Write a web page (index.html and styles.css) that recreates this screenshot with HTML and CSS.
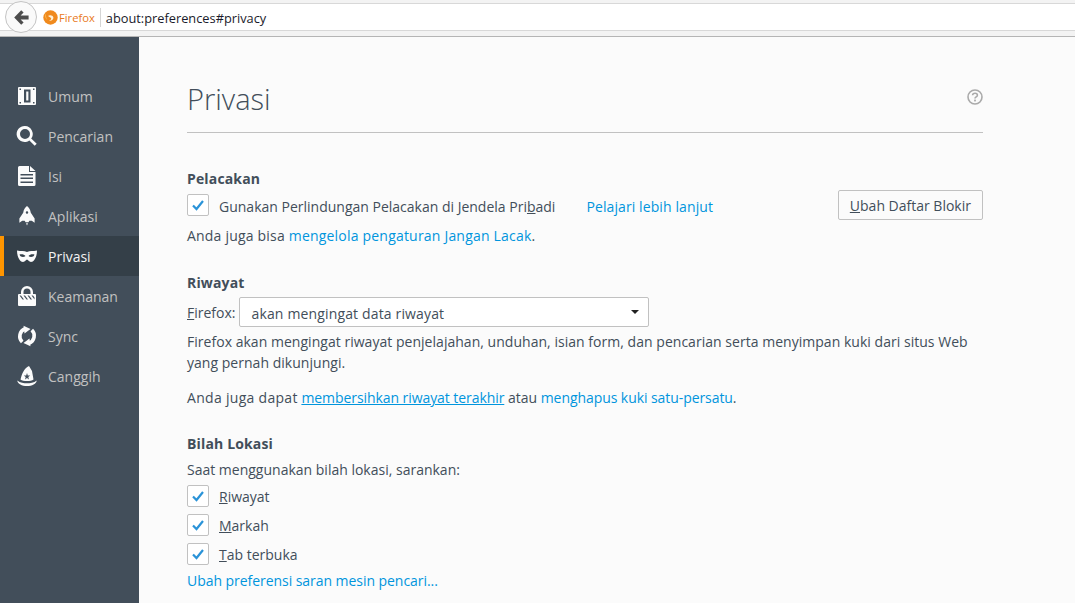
FILE: index.html
```html
<!DOCTYPE html>
<html lang="en">
<head>
    <meta charset="UTF-8">
    <title>Privasi</title>
    <link rel="stylesheet" href="styles.css">
</head>
<body>
    <!-- URL bar -->
    <div class="toolbar">
        <div class="back-btn">
            <svg width="15" height="15" viewBox="0 0 15 15"><path d="M7.2 0.3 L0.2 7.5 L7.2 14.7 L9.6 12.4 L6.6 9.5 H14.6 V5.5 H6.6 L9.6 2.6 Z" fill="#4d4d4d"/></svg>
        </div>
        <div class="url-bar">
            <svg class="fx-icon" width="15" height="15" viewBox="0 0 15 15">
                <circle cx="7.5" cy="7.5" r="7.2" fill="#f08a1d"/>
                <path d="M5 6 C6.5 4.6 10 5 10.4 7.6 C10.6 10 8 11.4 6 10.6 C7.8 10.4 8.6 9 8 8 C7.2 7 6 7 5 6 Z" fill="#fff2d8"/>
                <path d="M2 3.5 C3 5.5 3 8 4.5 10 C3 9 1.8 7 2 3.5 Z" fill="#ffc35a"/>
            </svg>
            <span class="fx-label">Firefox</span>
            <span class="url-text">about:preferences#privacy</span>
        </div>
    </div>

    <div class="main">
        <!-- Sidebar -->
        <nav class="sidebar">
            <div class="nav-item">
                <svg class="nav-icon" viewBox="-1 -1 20 20"><path fill-rule="evenodd" d="M1 0 H17 A1 1 0 0 1 18 1 V17 A1 1 0 0 1 17 18 H1 A1 1 0 0 1 0 17 V1 A1 1 0 0 1 1 0 Z M6 2.5 V15.5 H12.5 V2.5 Z M8.2 4.5 H10.4 V13.5 H8.2 Z M1.5 1.5 V3 H3 V1.5 Z M15 1.5 V3 H16.5 V1.5 Z M1.5 15 V16.5 H3 V15 Z M15 15 V16.5 H16.5 V15 Z"/></svg>
                Umum
            </div>
            <div class="nav-item">
                <svg class="nav-icon" viewBox="0 0 20 20"><path fill-rule="evenodd" d="M8 0 A8 8 0 0 1 14.2 12.6 L19.7 17.7 L17.7 19.7 L12.4 14.4 A8 8 0 1 1 8 0 Z M8 3 A5 5 0 1 0 8 13 A5 5 0 0 0 8 3 Z"/></svg>
                Pencarian
            </div>
            <div class="nav-item">
                <svg class="nav-icon" viewBox="0 0 18 20"><path fill-rule="evenodd" d="M1.5 0 H11 V6 H17.5 V18.5 A1.5 1.5 0 0 1 16 20 H1.5 A1.5 1.5 0 0 1 0 18.5 V1.5 A1.5 1.5 0 0 1 1.5 0 Z M2.5 8 V9.5 H15 V8 Z M2.5 11.5 V13 H15 V11.5 Z M2.5 15.5 V17 H15 V15.5 Z M12 0 L17.5 5 H12 Z"/></svg>
                Isi
            </div>
            <div class="nav-item">
                <svg class="nav-icon" viewBox="0 0 18 21"><path fill-rule="evenodd" d="M9 0 C11 1.5 12.5 4 13 7 L17 13 V17.5 L14 15.5 H11.5 L10.5 17 H7.5 L6.5 15.5 H4 L1 17.5 V13 L5 7 C5.5 4 7 1.5 9 0 Z M9 5.5 A1.3 1.3 0 1 0 9 8.1 A1.3 1.3 0 0 0 9 5.5 Z M8 18 H10 L9 20.5 Z"/></svg>
                Aplikasi
            </div>
            <div class="nav-item active">
                <svg class="nav-icon" viewBox="0 0 20 12"><path fill-rule="evenodd" d="M0 0.5 C4 1.5 7 0.5 10 2 C13 0.5 16 1.5 20 0.5 C20 7 17 12 14 12 C12 12 11 9.5 10 9.5 C9 9.5 8 12 6 12 C3 12 0 7 0 0.5 Z M2.5 4.5 C3.5 7.5 7 7.5 8.5 6 C7 4 4.5 4 2.5 4.5 Z M17.5 4.5 C16.5 7.5 13 7.5 11.5 6 C13 4 15.5 4 17.5 4.5 Z"/></svg>
                Privasi
            </div>
            <div class="nav-item">
                <svg class="nav-icon" viewBox="0 0 18 20"><path fill-rule="evenodd" d="M1 8 H3 V6 A6 6 0 0 1 15 6 V8 H17 A1 1 0 0 1 18 9 V19 A1 1 0 0 1 17 20 H1 A1 1 0 0 1 0 19 V9 A1 1 0 0 1 1 8 Z M5.5 8 H12.5 V6 A3.5 3.5 0 0 0 5.5 6 Z M1.5 9.5 L4.5 13.5 L6 13.5 L3 9.5 Z M5.5 9.5 L8.5 13.5 L10 13.5 L7 9.5 Z M9.5 9.5 L12.5 13.5 L14 13.5 L11 9.5 Z M13.5 9.5 L16.5 13.5 V11.5 L15 9.5 Z"/></svg>
                Keamanan
            </div>
            <div class="nav-item">
                <svg class="nav-icon" viewBox="0 0 20 20">
                    <path class="sync-arc" d="M5.2 16 A8 8 0 0 1 8 2.8"/>
                    <path d="M6.5 -0.2 L13.5 3 L7.5 7.5 Z"/>
                    <path class="sync-arc" d="M14.8 4 A8 8 0 0 1 12 17.2"/>
                    <path d="M13.5 20.2 L6.5 17 L12.5 12.5 Z"/>
                </svg>
                Sync
            </div>
            <div class="nav-item">
                <svg class="nav-icon" viewBox="0 0 20 20"><path fill-rule="evenodd" d="M12 0 L15 5 L16.5 13.5 C14 15.5 6 15.5 3.5 13.5 C5 8 7 2 12 0 Z M10 7 L9.2 9.4 L6.8 9.5 L8.7 11 L8 13.4 L10 12 L12 13.4 L11.3 11 L13.2 9.5 L10.8 9.4 Z M0.3 14.5 C3 17 7 17.2 10 17.2 C13 17.2 17 17 19.7 14.5 C19.5 18 15 20 10 20 C5 20 0.5 18 0.3 14.5 Z"/></svg>
                Canggih
            </div>
        </nav>

        <!-- Preferences pane -->
        <div class="content">
            <div class="page-header">
                <h1>Privasi</h1>
                <svg class="help-icon" width="16" height="16" viewBox="0 0 16 16">
                    <circle cx="8" cy="8" r="7" fill="none" stroke="#aaa" stroke-width="1.6"/>
                    <path d="M5.6 6.2 C5.7 3.6 10.4 3.6 10.4 6.2 C10.4 8 8 7.8 8 9.6" fill="none" stroke="#aaa" stroke-width="1.6"/>
                    <rect x="7.1" y="10.6" width="1.8" height="1.8" fill="#aaa"/>
                </svg>
            </div>

            <section class="tracking">
                <h2>Pelacakan</h2>
                <div class="tracking-row">
                    <div class="check-row">
                        <span class="checkbox"><svg width="14" height="12" viewBox="0 0 14 12"><path d="M2 6.5 L5.5 10 L12 2" fill="none" stroke="#2a93d8" stroke-width="2.2"/></svg></span>
                        <span class="check-label">Gunakan Perlindungan Pelacakan di Jendela Pri<u>b</u>adi</span>
                    </div>
                    <a class="learn-more">Pelajari lebih lanjut</a>
                    <button class="btn"><u>U</u>bah Daftar Blokir</button>
                </div>
                <p class="tracking-note">Anda juga bisa <a>mengelola pengaturan Jangan Lacak</a>.</p>
            </section>

            <section class="history">
                <h2>Riwayat</h2>
                <div class="select-row">
                    <label><u>F</u>irefox:</label>
                    <div class="select">
                        <span class="select-value">akan mengingat data riwayat</span>
                        <span class="arrow"></span>
                    </div>
                </div>
                <p class="history-desc">Firefox akan mengingat riwayat penjelajahan, unduhan, isian form, dan pencarian serta menyimpan kuki dari situs Web yang pernah dikunjungi.</p>
                <p class="history-note"><span class="lead">Anda juga dapat</span> <a class="underlined">membersihkan riwayat terakhir</a> atau <a>menghapus kuki satu-persatu</a>.</p>
            </section>

            <section class="location">
                <h2>Bilah Lokasi</h2>
                <p class="location-intro">Saat menggunakan bilah lokasi, sarankan:</p>
                <div class="check-row">
                    <span class="checkbox"><svg width="14" height="12" viewBox="0 0 14 12"><path d="M2 6.5 L5.5 10 L12 2" fill="none" stroke="#2a93d8" stroke-width="2.2"/></svg></span>
                    <span class="check-label"><u>R</u>iwayat</span>
                </div>
                <div class="check-row">
                    <span class="checkbox"><svg width="14" height="12" viewBox="0 0 14 12"><path d="M2 6.5 L5.5 10 L12 2" fill="none" stroke="#2a93d8" stroke-width="2.2"/></svg></span>
                    <span class="check-label"><u>M</u>arkah</span>
                </div>
                <div class="check-row">
                    <span class="checkbox"><svg width="14" height="12" viewBox="0 0 14 12"><path d="M2 6.5 L5.5 10 L12 2" fill="none" stroke="#2a93d8" stroke-width="2.2"/></svg></span>
                    <span class="check-label"><u>T</u>ab terbuka</span>
                </div>
                <a class="engine-link">Ubah preferensi saran mesin pencari...</a>
            </section>
        </div>
    </div>
</body>
</html>
```

FILE: styles.css
```css
html, body {
    height: 100%;
}

body {
    margin: 0;
    font-family: "Open Sans", "Noto Sans", sans-serif;
    font-size: 14px;
    color: #424e5a;
    background-color: #fbfbfb;
    overflow: hidden;
    display: flex;
    flex-direction: column;
}

/* URL bar */
.toolbar {
    height: 36px;
    flex: none;
    background-color: #f3f3f3;
    border-bottom: 1px solid #b5b5b5;
    position: relative;
    display: flex;
    align-items: center;
}

.back-btn {
    position: absolute;
    left: 5px;
    top: 1px;
    width: 30px;
    height: 30px;
    border: 1px solid #c4c4c4;
    border-radius: 50%;
    background-color: #fafafa;
    display: flex;
    align-items: center;
    justify-content: center;
    z-index: 1;
}

.url-bar {
    flex: 1;
    height: 26px;
    margin-top: -2px;
    background-color: #fff;
    border-top: 1px solid #d8d8d8;
    border-bottom: 1px solid #d8d8d8;
    display: flex;
    align-items: center;
    padding-left: 43px;
}

.fx-label {
    color: #e9791c;
    font-size: 11.2px;
    margin-left: 1px;
    padding-right: 5px;
    border-right: 1px solid #d5d5d5;
    line-height: 19px;
}

.url-text {
    color: #1a1a2a;
    font-size: 12.8px;
    margin-left: 5px;
    padding-top: 2px;
}

/* Sidebar */
.main {
    flex: 1;
    display: flex;
    min-height: 0;
}

.sidebar {
    width: 139px;
    flex: none;
    background-color: #424e5a;
    padding-top: 39px;
}

.nav-item {
    height: 40px;
    display: flex;
    align-items: center;
    color: #c1c1c1;
    font-size: 14px;
    box-sizing: border-box;
    padding-left: 48px;
    position: relative;
}

.nav-icon {
    position: absolute;
    left: 17px;
    top: 10px;
    width: 20px;
    height: 20px;
    fill: #fbfbfb;
    overflow: visible;
}

.sync-arc {
    fill: none;
    stroke: #fbfbfb;
    stroke-width: 3.6;
}

.nav-item.active {
    background-color: #343f48;
    color: #f2f2f2;
    border-left: 4px solid #ff9500;
    padding-left: 44px;
}

.nav-item.active .nav-icon {
    left: 13px;
}

/* Preferences pane */
.content {
    width: 796px;
    margin-left: 48px;
}

.page-header {
    height: 96px;
    box-sizing: border-box;
    border-bottom: 1px solid #c1c1c1;
    display: flex;
    justify-content: space-between;
    align-items: flex-start;
    padding-top: 42px;
}

h1 {
    margin: 0;
    font-size: 29px;
    font-weight: 300;
    line-height: 40px;
}

.help-icon {
    margin-top: 10px;
}

h2 {
    margin: 0;
    font-size: 14px;
    font-weight: 700;
    line-height: 20px;
    letter-spacing: 0.15px;
}

p {
    margin: 0;
}

a {
    color: #0095dd;
}

a.underlined {
    text-decoration: underline;
}

.tracking {
    padding-top: 36px;
}

.tracking-row {
    display: flex;
    align-items: center;
    height: 30px;
    margin-top: 1px;
}

.check-row {
    display: flex;
    align-items: center;
    height: 29px;
    gap: 10px;
}

.check-label {
    padding-top: 2px;
}

.checkbox {
    width: 20px;
    height: 20px;
    border: 1px solid #c1c1c1;
    border-radius: 2px;
    background-color: #fff;
    display: flex;
    align-items: center;
    justify-content: center;
    flex: none;
}

.learn-more {
    margin-left: 31px;
    padding-top: 2px;
    letter-spacing: 0.1px;
}

.btn {
    margin-left: auto;
    height: 30px;
    padding: 0 11px;
    font: inherit;
    color: #424e5a;
    background-color: #fbfbfb;
    border: 1px solid #c1c1c1;
    border-radius: 2px;
}

.tracking-note {
    margin-top: 6px;
    line-height: 20px;
    letter-spacing: 0.2px;
}

.history {
    padding-top: 27px;
}

.select-row {
    display: flex;
    align-items: center;
    gap: 3px;
    margin-top: 4px;
}

.select {
    width: 387px;
    height: 28px;
    border: 1px solid #c1c1c1;
    border-radius: 2px;
    background-color: #fff;
    display: flex;
    align-items: center;
    justify-content: space-between;
    padding: 0 9px 0 12px;
}

.select-value {
    letter-spacing: 0.15px;
    padding-top: 2px;
}

.arrow {
    width: 0;
    height: 0;
    border-left: 4px solid transparent;
    border-right: 4px solid transparent;
    border-top: 4px solid #222;
}

.history-desc {
    margin-top: 4px;
    line-height: 21px;
    letter-spacing: 0.03px;
}

.history-note {
    margin-top: 14px;
    line-height: 22px;
}

.history-note a {
    letter-spacing: -0.07px;
}

.lead {
    letter-spacing: 0.3px;
}

.location {
    padding-top: 25px;
}

.location-intro {
    line-height: 20px;
    margin-top: 6px;
    margin-bottom: 1px;
}

.engine-link {
    display: block;
    line-height: 20px;
    margin-top: 3px;
    letter-spacing: -0.05px;
}
```
